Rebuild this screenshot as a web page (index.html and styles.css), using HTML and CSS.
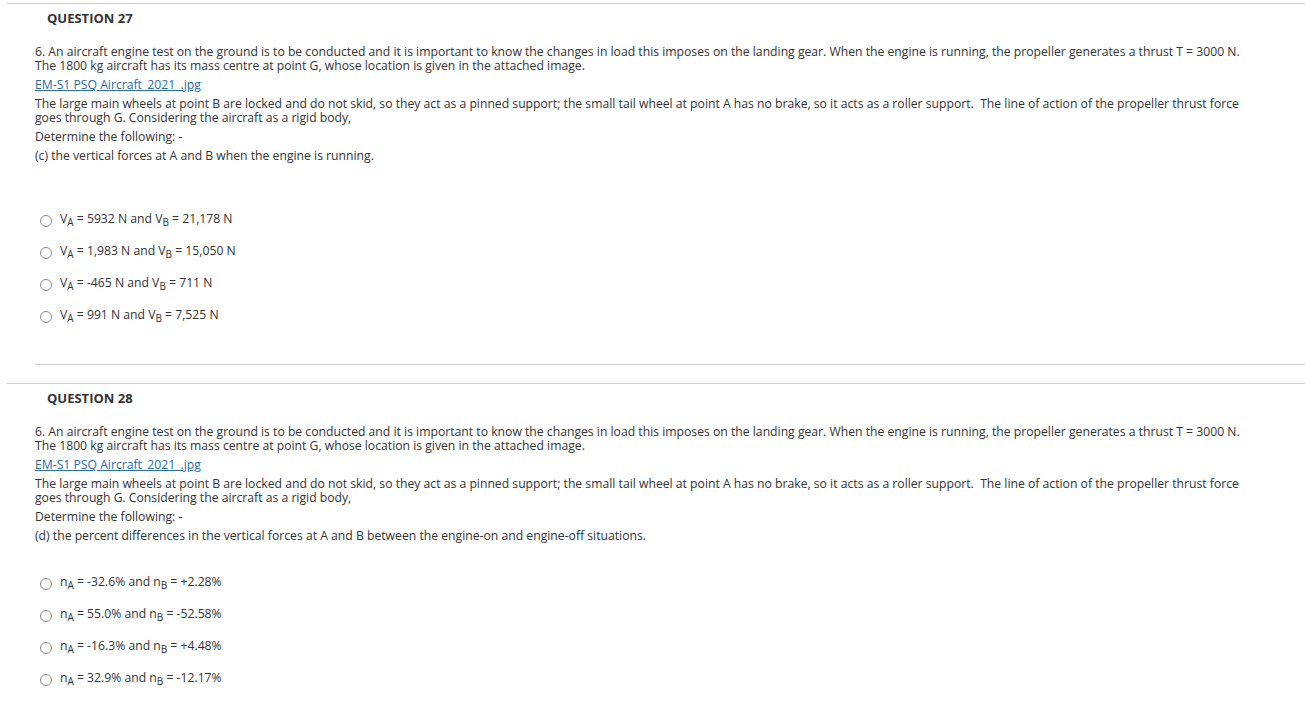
FILE: index.html
```html
<!DOCTYPE html>
<html>
<head>
<meta charset="utf-8">
<link rel="stylesheet" href="styles.css">
</head>
<body>
<div class="question q27">
  <h3 class="qhead">QUESTION 27</h3>
  <div class="qbody">
    <div class="stem">
      <p class="para">6. An aircraft engine test on the ground is to be conducted and it is important to know the changes in load this imposes on the landing gear. When the engine is running, the propeller generates a thrust T = 3000 N.<br>The 1800 kg aircraft has its mass centre at point G, whose location is given in the attached image.</p>
      <p class="para"><a class="file" href="#">EM-S1 PSQ Aircraft_2021_.jpg</a></p>
      <p class="para">The large main wheels at point B are locked and do not skid, so they act as a pinned support; the small tail wheel at point A has no brake, so it acts as a roller support.&nbsp; The line of action of the propeller thrust force goes through G. Considering the aircraft as a rigid body,</p>
      <p class="para">Determine the following: -</p>
      <p class="para">(c) the vertical forces at A and B when the engine is running.</p>
    </div>
    <ul class="answers a27">
      <li class="ans"><span class="radio"></span><span class="label">V<sub>A</sub> = 5932 N and V<sub>B</sub> = 21,178 N</span></li>
      <li class="ans"><span class="radio"></span><span class="label">V<sub>A</sub> = 1,983 N and V<sub>B</sub> = 15,050 N</span></li>
      <li class="ans"><span class="radio"></span><span class="label">V<sub>A</sub> = -465 N and V<sub>B</sub> = 711 N</span></li>
      <li class="ans"><span class="radio"></span><span class="label">V<sub>A</sub> = 991 N and V<sub>B</sub> = 7,525 N</span></li>
    </ul>
    <div class="inner-rule"></div>
  </div>
</div>
<div class="question q28">
  <h3 class="qhead">QUESTION 28</h3>
  <div class="qbody">
    <div class="stem">
      <p class="para">6. An aircraft engine test on the ground is to be conducted and it is important to know the changes in load this imposes on the landing gear. When the engine is running, the propeller generates a thrust T = 3000 N.<br>The 1800 kg aircraft has its mass centre at point G, whose location is given in the attached image.</p>
      <p class="para"><a class="file" href="#">EM-S1 PSQ Aircraft_2021_.jpg</a></p>
      <p class="para">The large main wheels at point B are locked and do not skid, so they act as a pinned support; the small tail wheel at point A has no brake, so it acts as a roller support.&nbsp; The line of action of the propeller thrust force goes through G. Considering the aircraft as a rigid body,</p>
      <p class="para">Determine the following: -</p>
      <p class="para">(d) the percent differences in the vertical forces at A and B between the engine-on and engine-off situations.</p>
    </div>
    <ul class="answers a28">
      <li class="ans"><span class="radio"></span><span class="label">n<sub>A</sub> = -32.6% and n<sub>B</sub> = +2.28%</span></li>
      <li class="ans"><span class="radio"></span><span class="label">n<sub>A</sub> = 55.0% and n<sub>B</sub> = -52.58%</span></li>
      <li class="ans"><span class="radio"></span><span class="label">n<sub>A</sub> = -16.3% and n<sub>B</sub> = +4.48%</span></li>
      <li class="ans"><span class="radio"></span><span class="label">n<sub>A</sub> = 32.9% and n<sub>B</sub> = -12.17%</span></li>
    </ul>
  </div>
</div>
</body>
</html>
```
FILE: styles.css
```css
html, body {
  margin: 0;
  padding: 0;
  background: #fff;
}
body {
  font-family: "Open Sans", "DejaVu Sans", sans-serif;
  font-size: 12.2px;
  color: #333;
  padding-top: 3px;
}
.question {
  margin-left: 7px;
  border-top: 1px solid #cdcdcd;
}
.qhead {
  margin: 0;
  padding: 6px 0 0 40px;
  font-size: 13px;
  font-weight: 700;
  line-height: 16px;
  color: #333;
}
.qbody {
  padding-left: 28px;
}
.stem {
  padding-top: 19px;
  max-width: 1215px;
}
.para {
  margin: 0 0 5px;
  line-height: 14px;
}
.file {
  color: #2a6ca6;
  text-decoration: underline;
}
.answers {
  list-style: none;
  margin: 0;
  padding: 0 0 0 5px;
}
.a27 { padding-top: 34px; }
.a28 { padding-top: 17px; }
.ans {
  display: flex;
  align-items: center;
  height: 32px;
}
.radio {
  width: 10px;
  height: 10px;
  border: 1px solid #8a8a8a;
  border-radius: 50%;
  margin: 5px 8px 0 0;
  flex: none;
}
.label sub {
  font-size: 10px;
  vertical-align: -3px;
  line-height: 0;
}
.inner-rule {
  border-top: 1px solid #cdcdcd;
  margin-top: 34px;
  margin-bottom: 18px;
}
```
